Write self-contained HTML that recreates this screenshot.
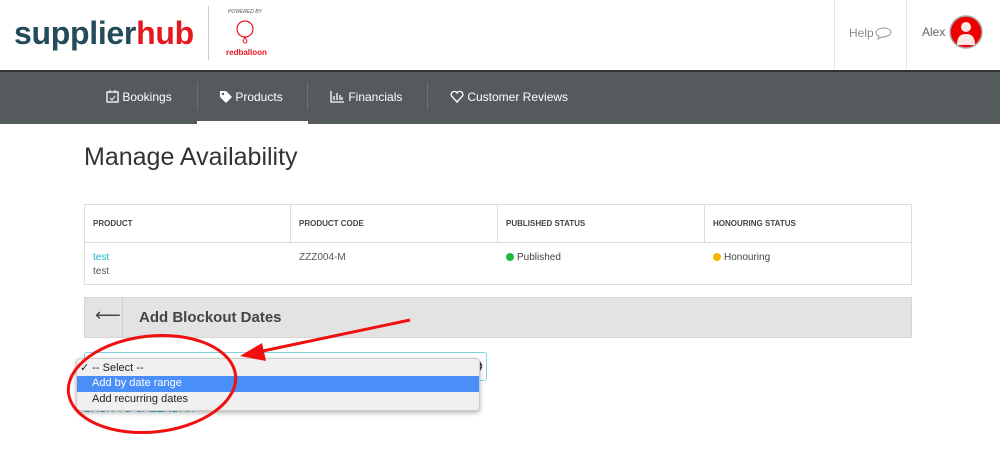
<!DOCTYPE html>
<html><head><style>
*{margin:0;padding:0;box-sizing:border-box}
body{width:1000px;height:455px;overflow:hidden;background:#fff;font-family:"Liberation Sans",sans-serif;position:relative}
.abs{position:absolute}
</style></head><body>
<!-- header -->
<div class="abs" style="left:14px;top:15px;font-size:32px;font-weight:bold;letter-spacing:-0.3px;color:#244b5a">supplier<span style="color:#e5181f">hub</span></div>
<div class="abs" style="left:208px;top:6px;width:1px;height:54px;background:#ccc"></div>
<div class="abs" style="left:228px;top:9px;font-size:5px;font-style:italic;color:#555">POWERED BY</div>
<svg class="abs" style="left:234px;top:20px" width="22" height="28"><ellipse cx="11" cy="9" rx="8" ry="8" fill="none" stroke="#e5181f" stroke-width="1.2"/><path d="M11 17 L9 21 a2 2 0 1 0 4 0 z" fill="none" stroke="#e5181f" stroke-width="1"/></svg>
<div class="abs" style="left:226px;top:48px;font-size:8px;font-weight:bold;color:#e5181f">redballoon</div>
<div class="abs" style="left:834px;top:0;width:1px;height:70px;background:#e4e4e4"></div>
<div class="abs" style="left:906px;top:0;width:1px;height:70px;background:#e4e4e4"></div>
<div class="abs" style="left:849px;top:26px;font-size:12px;color:#888">Help</div>
<svg class="abs" style="left:875px;top:26px" width="18" height="14"><path d="M9 2 C4 2 1 4 1 7 C1 9 3 10 4 10 L3 13 L7 11 C12 11 16 9 16 6 C16 4 13 2 9 2Z" fill="none" stroke="#999" stroke-width="1"/></svg>
<div class="abs" style="left:922px;top:25px;font-size:12px;color:#666">Alex</div>
<svg class="abs" style="left:949px;top:15px" width="34" height="34"><circle cx="17" cy="17" r="16" fill="#ee0000" stroke="#aaa" stroke-width="1.5"/><circle cx="17" cy="12" r="5" fill="#fde8e8"/><path d="M8 30 C8 21 12 19 17 19 C22 19 26 21 26 30Z" fill="#fde8e8"/></svg>
<!-- nav -->
<div class="abs" style="left:0;top:70px;width:1000px;height:54px;background:#555a5c;border-top:2px solid #333"></div>
<div class="abs" style="left:197px;top:121px;width:111px;height:4px;background:#fff"></div>
<div class="abs" style="left:197px;top:82px;width:1px;height:28px;background:#6c7072"></div>
<div class="abs" style="left:307px;top:82px;width:1px;height:28px;background:#6c7072"></div>
<div class="abs" style="left:427px;top:82px;width:1px;height:28px;background:#6c7072"></div>
<div class="abs" style="top:90px;left:106px;color:#fff;font-size:12px">
<svg width="13" height="13" style="vertical-align:-2px"><rect x="1" y="2" width="11" height="10" fill="none" stroke="#fff" stroke-width="1.3"/><path d="M4 0v3M9 0v3M4 8l2 2 3-4" stroke="#fff" fill="none"/></svg> Bookings</div>
<div class="abs" style="top:90px;left:219px;color:#fff;font-size:12px">
<svg width="13" height="13" style="vertical-align:-2px"><path d="M1 1h6l6 6-6 6-6-6z" fill="#fff"/><circle cx="4" cy="4" r="1.2" fill="#555a5c"/></svg> Products</div>
<div class="abs" style="top:90px;left:330px;color:#fff;font-size:12px">
<svg width="15" height="13" style="vertical-align:-2px"><path d="M1 1v11h13M4 10V6M7 10V3M10 10V5M12 10V7" stroke="#fff" stroke-width="1.3" fill="none"/></svg> Financials</div>
<div class="abs" style="top:90px;left:450px;color:#fff;font-size:12px">
<svg width="14" height="13" style="vertical-align:-2px"><path d="M7 12 L1.5 6 A3 3 0 0 1 7 3 A3 3 0 0 1 12.5 6 Z" fill="none" stroke="#fff" stroke-width="1.3"/></svg> Customer Reviews</div>
<!-- title -->
<div class="abs" style="left:84px;top:143px;font-size:25px;color:#333">Manage Availability</div>
<!-- table -->
<div class="abs" style="left:84px;top:204px;width:828px;height:81px;border:1px solid #ddd"></div>
<div class="abs" style="left:84px;top:242px;width:828px;height:1px;background:#ddd"></div>
<div class="abs" style="left:290px;top:204px;width:1px;height:38px;background:#ddd"></div>
<div class="abs" style="left:497px;top:204px;width:1px;height:38px;background:#ddd"></div>
<div class="abs" style="left:704px;top:204px;width:1px;height:38px;background:#ddd"></div>
<div class="abs" style="left:93px;top:219px;font-size:8px;font-weight:bold;color:#444">PRODUCT</div>
<div class="abs" style="left:299px;top:219px;font-size:8px;font-weight:bold;color:#444">PRODUCT CODE</div>
<div class="abs" style="left:506px;top:219px;font-size:8px;font-weight:bold;color:#444">PUBLISHED STATUS</div>
<div class="abs" style="left:713px;top:219px;font-size:8px;font-weight:bold;color:#444">HONOURING STATUS</div>
<div class="abs" style="left:93px;top:252px;font-size:10px;color:#1ab5d0">test</div>
<div class="abs" style="left:93px;top:266px;font-size:10px;color:#555">test</div>
<div class="abs" style="left:299px;top:252px;font-size:10px;color:#555">ZZZ004-M</div>
<div class="abs" style="left:506px;top:253px;width:8px;height:8px;border-radius:50%;background:#1db846"></div>
<div class="abs" style="left:517px;top:252px;font-size:10px;color:#444">Published</div>
<div class="abs" style="left:713px;top:253px;width:8px;height:8px;border-radius:50%;background:#f7b500"></div>
<div class="abs" style="left:724px;top:252px;font-size:10px;color:#444">Honouring</div>
<!-- blockout bar -->
<div class="abs" style="left:84px;top:297px;width:828px;height:41px;background:#e3e3e3;border:1px solid #d5d5d5"></div>
<div class="abs" style="left:122px;top:297px;width:1px;height:41px;background:#ccc"></div>
<div class="abs" style="left:95px;top:305px;font-size:18px;color:#444">⟵</div>
<div class="abs" style="left:139px;top:309px;font-size:15px;font-weight:bold;color:#444">Add Blockout Dates</div>
<!-- select -->
<div class="abs" style="left:84px;top:352px;width:403px;height:29px;border:1px solid #7fd3e3;border-radius:3px"></div>
<div class="abs" style="left:478px;top:361px;font-size:9px;color:#333;line-height:5px">▴<br>▾</div>
<div class="abs" style="left:84px;top:403px;font-size:11px;color:#1ab5d0">BACK TO CALENDAR</div>
<div class="abs" style="left:76px;top:358px;width:404px;height:53px;background:#f0f0f0;border:1px solid #ccc;border-radius:4px;box-shadow:0 2px 5px rgba(0,0,0,.3)"></div>
<div class="abs" style="left:80px;top:361px;font-size:11px;color:#222">✓ -- Select --</div>
<div class="abs" style="left:77px;top:376px;width:402px;height:16px;background:#4a8ef8"></div>
<div class="abs" style="left:92px;top:377px;font-size:11px;color:#fff">Add by date range</div>
<div class="abs" style="left:92px;top:393px;font-size:11px;color:#222">Add recurring dates</div>
<!-- annotations -->
<svg class="abs" style="left:0;top:0" width="1000" height="455">
<ellipse cx="152" cy="384" rx="84" ry="48" transform="rotate(-6 152 384)" fill="none" stroke="#f01010" stroke-width="3"/>
<path d="M410 320 L258 352" stroke="#f01010" stroke-width="3"/>
<path d="M240 356 L262 343 L266 361 Z" fill="#f01010"/>
</svg>
</body></html>
